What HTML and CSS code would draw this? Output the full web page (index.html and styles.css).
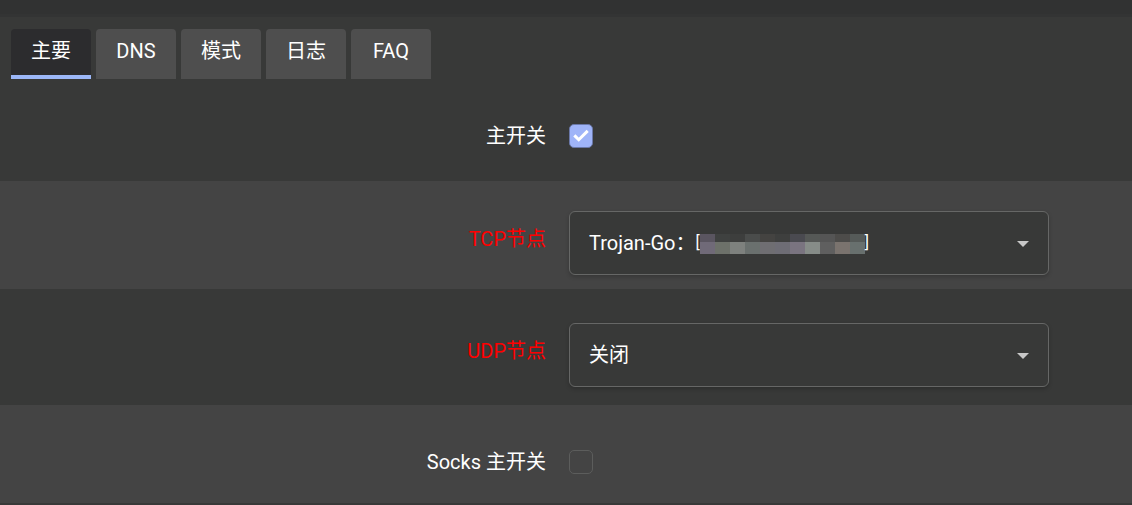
FILE: index.html
```html
<!DOCTYPE html>
<html lang="zh-CN">
<head>
<meta charset="utf-8">
<link rel="stylesheet" href="styles.css">
</head>
<body>
<div class="topbar"></div>
<div class="tabs">
  <div class="tab active">主要</div>
  <div class="tab">DNS</div>
  <div class="tab">模式</div>
  <div class="tab">日志</div>
  <div class="tab">FAQ</div>
</div>
<div class="form">
  <div class="row row1">
    <div class="label">主开关</div>
    <div class="control"><span class="checkbox checked">
      <svg viewBox="0 0 24 24" width="18" height="18"><path d="M4.5 12.5l4.5 4.5L19.5 6.5" fill="none" stroke="#fff" stroke-width="4" stroke-linecap="square" stroke-linejoin="miter"/></svg>
    </span></div>
  </div>
  <div class="row row2 alt">
    <div class="label red">TCP节点</div>
    <div class="control">
      <div class="select">
        <span class="value">Trojan-Go：<span class="bracket">[</span><span class="mosaic"><span class="mrow"><i style="background:#5a5560"></i><i style="background:#3f4140"></i><i style="background:#3d3e3d"></i><i style="background:#4a4c4b"></i><i style="background:#444341"></i><i style="background:#3e3f3e"></i><i style="background:#4a4a50"></i><i style="background:#555856"></i><i style="background:#555555"></i><i style="background:#4d4c4a"></i><i style="background:#555a58"></i></span><span class="mrow"><i style="background:#706a78"></i><i style="background:#6d716a"></i><i style="background:#7e817e"></i><i style="background:#6a706e"></i><i style="background:#6f6e72"></i><i style="background:#6e6d75"></i><i style="background:#7a7480"></i><i style="background:#868c88"></i><i style="background:#5f5f5f"></i><i style="background:#7a736e"></i><i style="background:#68706e"></i></span></span><span class="bracket">]</span></span>
        <span class="arrow"></span>
      </div>
    </div>
  </div>
  <div class="row row3">
    <div class="label red">UDP节点</div>
    <div class="control">
      <div class="select">
        <span class="value">关闭</span>
        <span class="arrow"></span>
      </div>
    </div>
  </div>
  <div class="row row4 alt">
    <div class="label">Socks 主开关</div>
    <div class="control"><span class="checkbox"></span></div>
  </div>
</div>
</body>
</html>
```
FILE: styles.css
```css
html, body {
  margin: 0;
  padding: 0;
}
body {
  width: 1132px;
  height: 505px;
  overflow: hidden;
  background: #383938;
  font-family: Roboto, "Noto Sans CJK SC", sans-serif;
  color: #ffffff;
  font-size: 20px;
}
.topbar {
  height: 14px;
  background: #313232;
  border-bottom: 3px solid #333434;
}
.tabs {
  display: flex;
  gap: 5px;
  padding: 12px 0 0 11px;
  height: 50px;
}
.tab {
  width: 80px;
  height: 50px;
  box-sizing: border-box;
  background: #4e4e4e;
  border-radius: 4px 4px 0 0;
  text-align: center;
  line-height: 44px;
  font-size: 20px;
}
.tab.active {
  background: #2c2c2e;
  border-bottom: 4px solid #9cb7f8;
}
.row {
  display: flex;
  align-items: flex-start;
  box-sizing: border-box;
}
.alt {
  background: #444444;
}
.row1 { height: 102px; padding-top: 45px; }
.row2 { height: 108px; padding-top: 30px; }
.row3 { height: 116px; padding-top: 34px; }
.row4 { height: 98px; padding-top: 45px; }
.label {
  width: 546px;
  text-align: right;
  line-height: 24px;
  flex: none;
}
.row2 .label, .row3 .label { padding-top: 16px; }
.red {
  color: #ff0000;
}
.control {
  margin-left: 23px;
}
.checkbox {
  display: flex;
  align-items: center;
  justify-content: center;
  width: 24px;
  height: 24px;
  box-sizing: border-box;
  border: 1px solid #5c5d5c;
  border-radius: 5px;
  background: #444444;
}
.checkbox.checked {
  background: #9fb4f8;
  border: 1.5px solid #6a78a8;
}
.select {
  width: 480px;
  height: 64px;
  box-sizing: border-box;
  border: 1px solid #666766;
  border-radius: 6px;
  background: #383938;
  box-shadow: 0 2px 4px rgba(0,0,0,0.2);
  display: flex;
  align-items: center;
  padding-left: 19px;
  position: relative;
}
.value {
  display: flex;
  align-items: center;
  line-height: 24px;
}
.bracket {
  font-size: 16px;
  color: #ffffff;
}
.mosaic {
  display: flex;
  flex-direction: column;
  margin-top: 2px;
}
.mrow {
  display: flex;
}
.mrow i {
  display: block;
  width: 15px;
  height: 8px;
}
.mrow + .mrow i {
  height: 12px;
}
.arrow {
  position: absolute;
  right: 19px;
  top: 29px;
  width: 0;
  height: 0;
  border-left: 6px solid transparent;
  border-right: 6px solid transparent;
  border-top: 6px solid #c8c8c8;
}
```
